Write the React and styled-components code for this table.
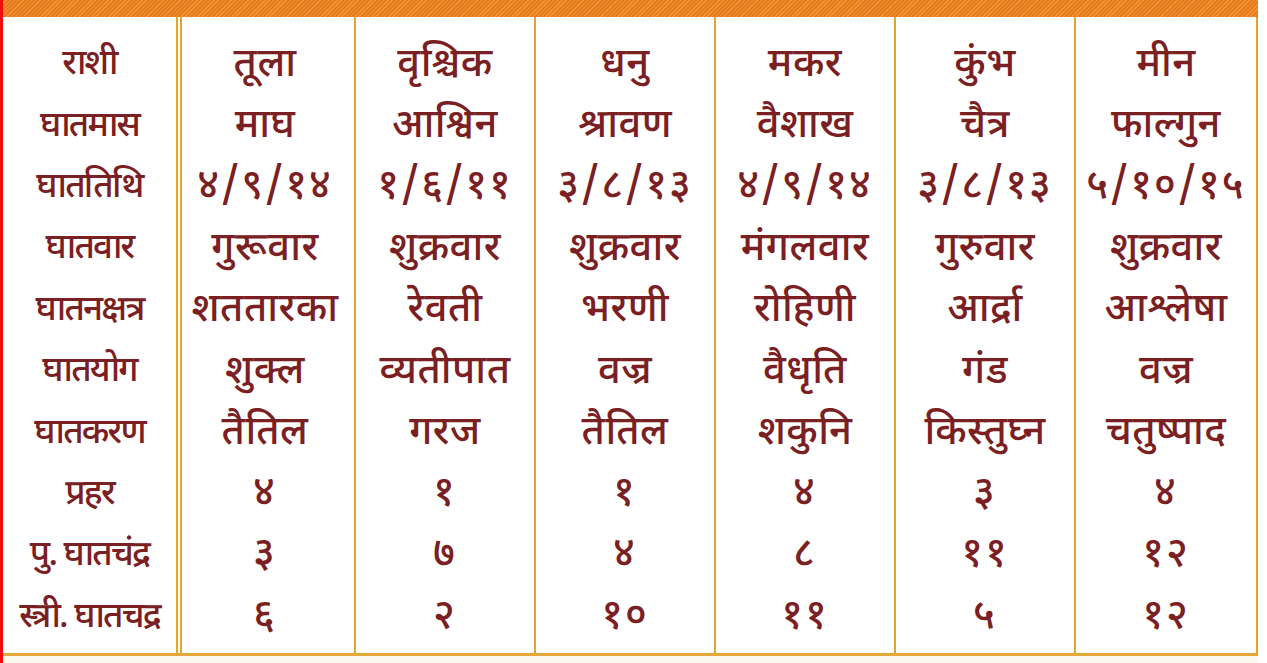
import styled, { createGlobalStyle } from "styled-components";

const GlobalStyle = createGlobalStyle`
  html, body {
    margin: 0;
    padding: 0;
    background: #ffffff;
  }
  body {
    font-family: "Noto Sans Devanagari", "Lohit Devanagari", "Noto Sans", sans-serif;
  }
`;

const labels = [
  "राशी",
  "घातमास",
  "घाततिथि",
  "घातवार",
  "घातनक्षत्र",
  "घातयोग",
  "घातकरण",
  "प्रहर",
  "पु. घातचंद्र",
  "स्त्री. घातचद्र",
];

const columns = [
  ["तूला", "माघ", "४/९/१४", "गुरूवार", "शततारका", "शुक्ल", "तैतिल", "४", "३", "६"],
  ["वृश्चिक", "आश्विन", "१/६/११", "शुक्रवार", "रेवती", "व्यतीपात", "गरज", "१", "७", "२"],
  ["धनु", "श्रावण", "३/८/१३", "शुक्रवार", "भरणी", "वज्र", "तैतिल", "१", "४", "१०"],
  ["मकर", "वैशाख", "४/९/१४", "मंगलवार", "रोहिणी", "वैधृति", "शकुनि", "४", "८", "११"],
  ["कुंभ", "चैत्र", "३/८/१३", "गुरुवार", "आर्द्रा", "गंड", "किस्तुघ्न", "३", "११", "५"],
  ["मीन", "फाल्गुन", "५/१०/१५", "शुक्रवार", "आश्लेषा", "वज्र", "चतुष्पाद", "४", "१२", "१२"],
];

const App = () => {
  return (
    <>
      <GlobalStyle />
      <Page>
        <Sheet>
          <Band />
          <Table>
            <Column variant="label">
              {labels.map((l) => (
                <Cell key={l} variant="label">
                  {l}
                </Cell>
              ))}
            </Column>
            {columns.map((col, i) => (
              <Column key={i} last={i === columns.length - 1}>
                {col.map((v, j) => (
                  <Cell key={j} numeric={/^[०-९/]+$/.test(v)}>
                    {v}
                  </Cell>
                ))}
              </Column>
            ))}
          </Table>
          <Footer />
        </Sheet>
      </Page>
    </>
  );
};

// Estilos
const Page = styled.div`
  width: 1267px;
  height: 663px;
  display: flex;
  background: #ffffff;
  overflow: hidden;
`;

const Sheet = styled.div`
  width: 1259px;
  margin-left: 3px;
  margin-right: 5px;
  box-shadow: -3px 0 0 #f20d0d, 6px 0 0 #ffffff, 8px 0 0 #f20d0d;
  display: flex;
  flex-direction: column;
`;

const Band = styled.div`
  height: 17px;
  margin-right: 4px;
  background: repeating-linear-gradient(
    135deg,
    #e57a22 0px,
    #e57a22 2px,
    #f0992f 2px,
    #f0992f 3px
  );
`;

const Table = styled.div`
  flex: 1;
  display: grid;
  grid-template-columns: 173px repeat(6, 1fr);
  margin-right: 4px;
  border-right: 2px solid #e3a331;
  border-bottom: 3px solid #e6a83a;
`;

const Column = styled.div`
  display: flex;
  flex-direction: column;
  padding: 18px 0 4px;
  border-right: 2px solid #e3a331;

  ${(props) =>
    props.variant === "label" &&
    `
    border-right: 6px double #e3a331;
    width: 179px;
    box-sizing: border-box;
  `}

  ${(props) => props.last && "border-right: 0;"}
`;

const Cell = styled.div`
  flex: 1;
  display: flex;
  align-items: center;
  justify-content: center;
  font-size: 40px;
  font-weight: 500;
  color: #7a2022;
  white-space: nowrap;
  letter-spacing: 0.5px;
  line-height: 1;

  ${(props) => props.numeric && "letter-spacing: 2px; font-size: 41px;"}

  ${(props) =>
    props.variant === "label" &&
    `
    font-size: 35px;
    letter-spacing: -1.8px;
  `}
`;

const Footer = styled.div`
  height: 7px;
  margin-right: 4px;
  background: #fbf8ef;
`;

export default App;
